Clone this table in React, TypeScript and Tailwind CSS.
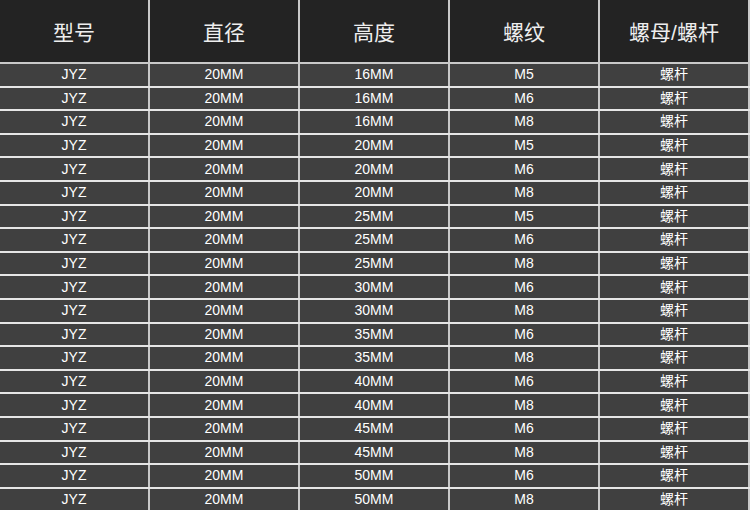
import React from "react";

const headers = ["型号", "直径", "高度", "螺纹", "螺母/螺杆"];

const rows: [string, string][] = [
  ["16MM", "M5"],
  ["16MM", "M6"],
  ["16MM", "M8"],
  ["20MM", "M5"],
  ["20MM", "M6"],
  ["20MM", "M8"],
  ["25MM", "M5"],
  ["25MM", "M6"],
  ["25MM", "M8"],
  ["30MM", "M6"],
  ["30MM", "M8"],
  ["35MM", "M6"],
  ["35MM", "M8"],
  ["40MM", "M6"],
  ["40MM", "M8"],
  ["45MM", "M6"],
  ["45MM", "M8"],
  ["50MM", "M6"],
  ["50MM", "M8"],
];

const font = { fontFamily: '"Liberation Sans", "Noto Sans CJK SC", sans-serif' };

export default function App() {
  return (
    <div className="w-[750px] h-[510px] overflow-hidden bg-[#232323]" style={font}>
      <div className="flex h-[64px] border-b-2 border-[#c9c9c9] bg-[#232323]">
        {headers.map((h) => (
          <div
            key={h}
            className="w-[150px] flex items-center justify-center pt-1 border-r-2 border-[#c9c9c9] text-[21px] text-[#eeeeee]"
          >
            {h}
          </div>
        ))}
      </div>
      {rows.map(([height, thread], i) => (
        <div key={i} className="flex h-[23.6px] border-b-2 border-[#e6e6e6] bg-[#404040] text-[14px] text-white">
          {["JYZ", "20MM", height, thread, "螺杆"].map((c, j) => (
            <div
              key={j}
              className="w-[150px] flex items-center justify-center border-r-2 border-[#c9c9c9]"
            >
              {c}
            </div>
          ))}
        </div>
      ))}
    </div>
  );
}
